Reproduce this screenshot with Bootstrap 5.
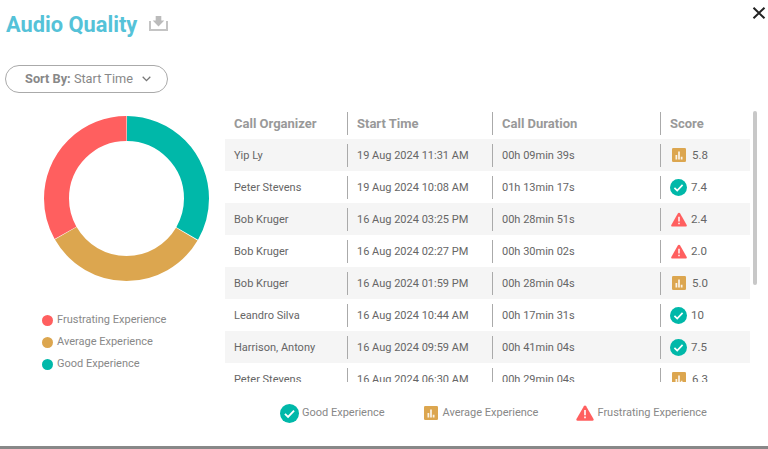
<!DOCTYPE html>
<html lang="en"><head><meta charset="utf-8"><title>Audio Quality</title>
<link href="https://cdn.jsdelivr.net/npm/bootstrap@5.3.0/dist/css/bootstrap.min.css" rel="stylesheet">
<style>
html,body{height:449px;overflow:hidden;background:#fff}
body{font-family:Roboto,"Liberation Sans",sans-serif;color:#666;font-size:12px;border-bottom:3px solid #888;box-sizing:border-box;position:relative}
.aq-head{padding:12px 0 0 6px;height:65px;gap:12px}
.aq-title{font-size:21.8px;font-weight:700;color:#55c2d8;line-height:26px;margin:0}
.aq-close{position:absolute;top:7px;right:2px;background:none;border:0;padding:0;line-height:0}
.aq-sort{margin-left:5px;width:163px;height:28px;border:1px solid #aaa;border-radius:14px;color:#888;font-size:12.75px;background:#fff;padding:0 0 0 3px}
.aq-sort b{font-weight:700}
.aq-chev{margin-left:9px}
.aq-main{margin-top:18px;height:272px}
.aq-left{width:225px}
.aq-donut{display:block;margin:5px 0 0 44px}
.aq-legend{margin:31px 0 0 42px;gap:6px;font-size:11px;color:#888}
.aq-legend div{height:16px}
.aq-dot{width:11px;height:11px;border-radius:50%;display:inline-block;margin-right:4px}
.aq-dot-bad{background:#ff5f5f}
.aq-dot-avg{background:#dca64f}
.aq-dot-good{background:#00b8a9}
.aq-tablewrap{width:525px;height:271px;overflow:hidden;position:relative}
.aq-grid{width:525px;table-layout:fixed;border-collapse:collapse;margin:0}
.aq-grid th{height:28px;font-size:13px;font-weight:700;color:#999;padding:1px 0 0;vertical-align:top;white-space:nowrap}
.aq-grid td{height:32px;padding:0;font-size:11px;color:#666;white-space:nowrap}
.aq-grid tbody tr:nth-child(odd) td{background:#f5f5f5}
.aq-cell{display:flex;align-items:center;height:23px;padding-left:9px;border-left:1px solid #aaa}
.aq-grid td .aq-cell{padding-top:2px}
.aq-grid td svg{margin-top:-2px}
.aq-first{border-left:0}
.aq-num{font-size:11.5px}
.aq-grid td .aq-ico-a{margin-left:2px;margin-right:6px}
.aq-grid td .aq-ico-g{margin-right:4px}
.aq-grid td .aq-ico-b{margin-left:1px;margin-right:4px}
.aq-scrollbar{position:absolute;left:753px;top:111px;width:4px;height:174px;background:#c8c8c8;border-radius:2px}
.aq-foot{margin-top:9px;height:42px;padding-left:280px;color:#888;font-size:11px;gap:38px}
.aq-foot>div{gap:3px}
.aq-foot .aq-gapa{gap:5px;margin-left:1px}
</style></head><body>
<svg width="0" height="0" class="position-absolute"><defs>
<symbol id="i-good" viewBox="0 0 20 20"><circle cx="10" cy="10" r="10" fill="#00b8a9"/><path d="M5.200 10.400l3.300 3.200 6.300-6.600" fill="none" stroke="#fff" stroke-width="2"/></symbol>
<symbol id="i-avg" viewBox="0 0 16 16"><rect width="16" height="16" rx="1.500" fill="#dca64f"/><path d="M4 8h2v5H4zM7 4h2v9H7zM10 10h2v3h-2z" fill="#fff" opacity=".85"/></symbol>
<symbol id="i-bad" viewBox="0 0 20 18"><path d="M10 .5c.6 0 1 .3 1.300.8l8.300 14.500c.5.9-.1 1.900-1.100 1.900H1.500c-1 0-1.600-1-1.100-1.900L8.700 1.300C9 .8 9.400.5 10 .5z" fill="#ff5f5f"/><path d="M9.100 5.500h1.800v6H9.100zM9.100 13h1.800v2H9.100z" fill="#fff"/></symbol>
</defs></svg>
<div class="d-flex align-items-start aq-head">
<h1 class="aq-title">Audio Quality</h1>
<svg width="19" height="15" viewBox="0 0 19 15" class="mt-1"><path d="M6.700 0h5.600v4.500h3L9.500 10.500 3.700 4.500h3z" fill="#bbb"/><path d="M1 5v9h17V5" fill="none" stroke="#c4c4c4" stroke-width="2"/></svg>
</div>
<button type="button" class="aq-close" aria-label="Close"><svg width="14" height="12" viewBox="0 0 14 12"><path d="M1.500 .7l11 10.600M12.500 .7l-11 10.600" stroke="#222" stroke-width="2" fill="none"/></svg></button>
<button type="button" class="aq-sort d-flex align-items-center justify-content-center"><span><b>Sort By:</b> Start Time</span><svg class="aq-chev" width="9" height="6" viewBox="0 0 9 6"><path d="M.7.8l3.800 3.800L8.300.8" fill="none" stroke="#777" stroke-width="1.300"/></svg></button>
<div class="d-flex aq-main">
<div class="aq-left">
<svg class="aq-donut" width="165" height="165" viewBox="0 0 165 165"><g fill="none" stroke-width="25" transform="rotate(-90 82.500 82.500)"><circle cx="82.500" cy="82.500" r="70" stroke="#00b8a9" stroke-dasharray="145.800 294" stroke-dashoffset="-.5"/><circle cx="82.500" cy="82.500" r="70" stroke="#dca64f" stroke-dasharray="145.800 294" stroke-dashoffset="-147.100"/><circle cx="82.500" cy="82.500" r="70" stroke="#ff5f5f" stroke-dasharray="145.800 294" stroke-dashoffset="-293.500"/></g></svg>
<div class="d-flex flex-column aq-legend">
<div class="d-flex align-items-center"><span class="aq-dot aq-dot-bad"></span>Frustrating Experience</div>
<div class="d-flex align-items-center"><span class="aq-dot aq-dot-avg"></span>Average Experience</div>
<div class="d-flex align-items-center"><span class="aq-dot aq-dot-good"></span>Good Experience</div>
</div></div>
<div class="aq-tablewrap">
<table class="aq-grid"><colgroup><col style="width:122px"><col style="width:145px"><col style="width:168px"><col></colgroup>
<thead><tr><th><div class="aq-cell aq-first">Call Organizer</div></th><th><div class="aq-cell">Start Time</div></th><th><div class="aq-cell">Call Duration</div></th><th><div class="aq-cell">Score</div></th></tr></thead>
<tbody>
<tr><td><div class="aq-cell aq-first">Yip Ly</div></td><td><div class="aq-cell">19 Aug 2024 11:31 AM</div></td><td><div class="aq-cell">00h 09min 39s</div></td><td><div class="aq-cell aq-num"><svg width="14" height="14" class="aq-ico-a"><use href="#i-avg"/></svg>5.8</div></td></tr>
<tr><td><div class="aq-cell aq-first">Peter Stevens</div></td><td><div class="aq-cell">19 Aug 2024 10:08 AM</div></td><td><div class="aq-cell">01h 13min 17s</div></td><td><div class="aq-cell aq-num"><svg width="17" height="17" class="aq-ico-g"><use href="#i-good"/></svg>7.4</div></td></tr>
<tr><td><div class="aq-cell aq-first">Bob Kruger</div></td><td><div class="aq-cell">16 Aug 2024 03:25 PM</div></td><td><div class="aq-cell">00h 28min 51s</div></td><td><div class="aq-cell aq-num"><svg width="16" height="15" class="aq-ico-b"><use href="#i-bad"/></svg>2.4</div></td></tr>
<tr><td><div class="aq-cell aq-first">Bob Kruger</div></td><td><div class="aq-cell">16 Aug 2024 02:27 PM</div></td><td><div class="aq-cell">00h 30min 02s</div></td><td><div class="aq-cell aq-num"><svg width="16" height="15" class="aq-ico-b"><use href="#i-bad"/></svg>2.0</div></td></tr>
<tr><td><div class="aq-cell aq-first">Bob Kruger</div></td><td><div class="aq-cell">16 Aug 2024 01:59 PM</div></td><td><div class="aq-cell">00h 28min 04s</div></td><td><div class="aq-cell aq-num"><svg width="14" height="14" class="aq-ico-a"><use href="#i-avg"/></svg>5.0</div></td></tr>
<tr><td><div class="aq-cell aq-first">Leandro Silva</div></td><td><div class="aq-cell">16 Aug 2024 10:44 AM</div></td><td><div class="aq-cell">00h 17min 31s</div></td><td><div class="aq-cell aq-num"><svg width="17" height="17" class="aq-ico-g"><use href="#i-good"/></svg>10</div></td></tr>
<tr><td><div class="aq-cell aq-first">Harrison, Antony</div></td><td><div class="aq-cell">16 Aug 2024 09:59 AM</div></td><td><div class="aq-cell">00h 41min 04s</div></td><td><div class="aq-cell aq-num"><svg width="17" height="17" class="aq-ico-g"><use href="#i-good"/></svg>7.5</div></td></tr>
<tr><td><div class="aq-cell aq-first">Peter Stevens</div></td><td><div class="aq-cell">16 Aug 2024 06:30 AM</div></td><td><div class="aq-cell">00h 29min 04s</div></td><td><div class="aq-cell aq-num"><svg width="14" height="14" class="aq-ico-a"><use href="#i-avg"/></svg>6.3</div></td></tr>
</tbody></table>
</div></div>
<div class="aq-scrollbar"></div>
<div class="d-flex align-items-center aq-foot">
<div class="d-flex align-items-center"><svg width="19" height="19"><use href="#i-good"/></svg>Good Experience</div>
<div class="d-flex align-items-center aq-gapa"><svg width="14" height="14"><use href="#i-avg"/></svg>Average Experience</div>
<div class="d-flex align-items-center"><svg width="18" height="16"><use href="#i-bad"/></svg>Frustrating Experience</div>
</div>
</body></html>
